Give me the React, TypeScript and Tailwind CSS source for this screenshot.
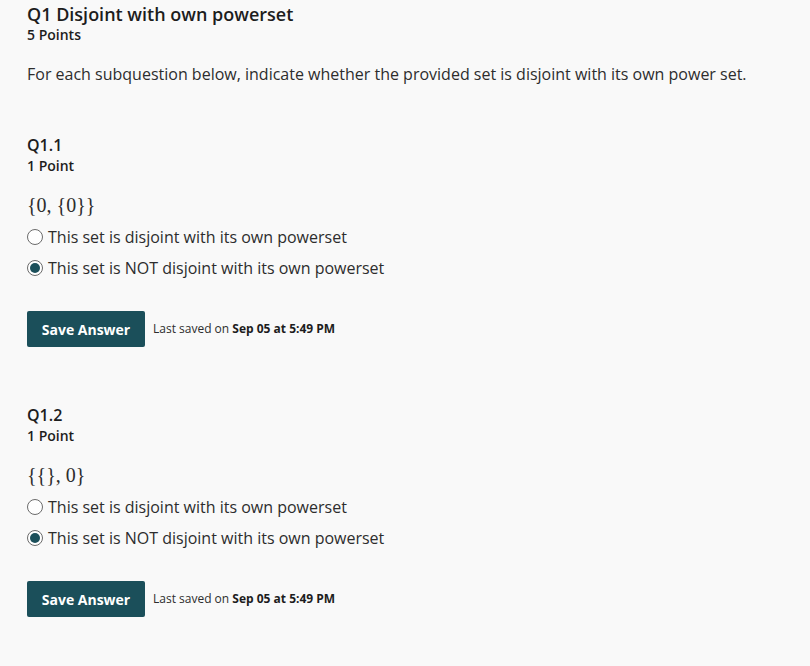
import React from "react";

function Radio({ checked }: { checked: boolean }) {
  return (
    <span className="inline-flex h-[16px] w-[16px] shrink-0 items-center justify-center rounded-full border border-[#6b6b6b] bg-white">
      {checked && <span className="h-[10px] w-[10px] rounded-full bg-[#1b4f5a]" />}
    </span>
  );
}

function Sub({ num, math }: { num: string; math: React.ReactNode }) {
  return (
    <div className="flex flex-col">
      <div className="text-[16px] font-semibold leading-[22px] text-[#1d1d1d]">{num}</div>
      <div className="mt-[1px] text-[14px] font-semibold leading-[18px] text-[#1d1d1d]">1 Point</div>
      <div className="mt-[17px] text-[20px] leading-[26px] text-[#2d2d2d]" style={{ fontFamily: '"Liberation Serif", "DejaVu Serif", serif' }}>
        {math}
      </div>
      <div className="mt-[8px] flex flex-col gap-[9px]">
        <label className="flex items-center gap-[5px] text-[16px] leading-[22px] text-[#2d2d2d]">
          <Radio checked={false} />
          This set is disjoint with its own powerset
        </label>
        <label className="flex items-center gap-[5px] text-[16px] leading-[22px] text-[#2d2d2d]">
          <Radio checked={true} />
          This set is NOT disjoint with its own powerset
        </label>
      </div>
      <div className="mt-[32px] flex items-center gap-[8px]">
        <button className="h-[36px] w-[118px] rounded-[2px] bg-[#1b4f5a] text-[14px] font-bold text-white">
          Save Answer
        </button>
        <span className="text-[12px] text-[#2d2d2d]">
          Last saved on <span className="font-bold text-[#1d1d1d]">Sep 05 at 5:49 PM</span>
        </span>
      </div>
    </div>
  );
}

export default function App() {
  return (
    <div className="min-h-[666px] w-full bg-[#f9f9f9] px-[27px] pt-[2px]" style={{ fontFamily: '"Open Sans", sans-serif' }}>
      <h1 className="text-[18px] font-semibold leading-[24px] text-[#1d1d1d]">Q1 Disjoint with own powerset</h1>
      <div className="text-[14px] font-semibold leading-[18px] text-[#1d1d1d]">5 Points</div>
      <p className="mt-[18px] text-[16px] leading-[24px] text-[#2d2d2d]">
        For each subquestion below, indicate whether the provided set is disjoint with its own power set.
      </p>
      <div className="mt-[48px] flex flex-col gap-[57px]">
        <Sub num="Q1.1" math={<span>{"{0, {0}}"}</span>} />
        <Sub num="Q1.2" math={<span>{"{{}, 0}"}</span>} />
      </div>
    </div>
  );
}
